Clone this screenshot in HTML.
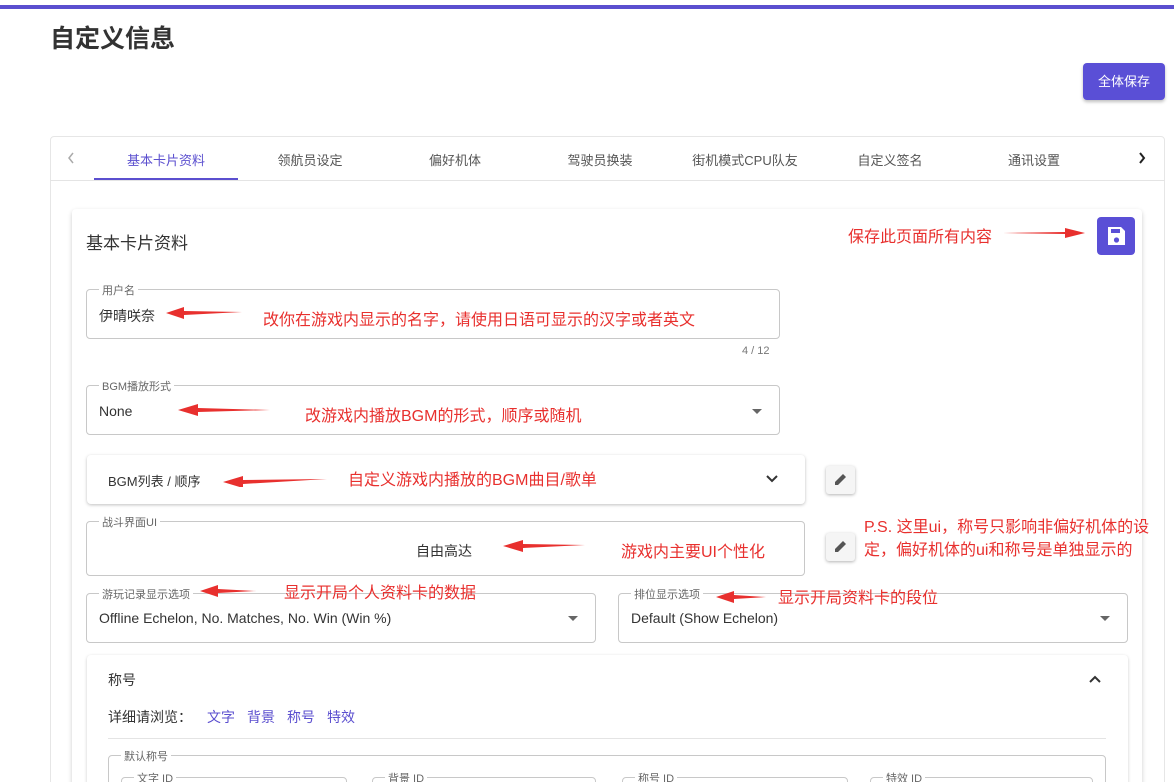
<!DOCTYPE html>
<html><head><meta charset="utf-8"><style>
*{box-sizing:border-box;margin:0;padding:0}
html,body{width:1174px;height:782px;overflow:hidden}
body{background:#fff;font-family:"Liberation Sans","Noto Sans CJK SC",sans-serif;color:#333;position:relative}
.a{position:absolute}
.fs{position:absolute;border:1px solid #c8c8c8;border-radius:4px}
.lb{position:absolute;top:-8px;background:#fff;padding:0 3px;font-size:11px;color:#666}
.red{position:absolute;color:#e8302e;font-size:16px;white-space:nowrap}
.tab{position:absolute;top:150px;font-size:13px;color:#555;transform:translateX(-50%);white-space:nowrap}
.eb{position:absolute;width:29px;height:28px;background:#f5f5f5;border-radius:3px;box-shadow:0 1px 3px rgba(0,0,0,.3)}
.val{position:absolute;font-size:14px;color:#333}
.tri{position:absolute;width:0;height:0;border-left:5px solid transparent;border-right:5px solid transparent;border-top:5px solid #666}
.lk{color:#5b4fcf;position:absolute;top:0}
</style></head><body>
<div class="a" style="left:0;top:5px;width:1174px;height:4px;background:#5b4fcf"></div>
<div class="a" style="left:50px;top:19px;font-size:25px;font-weight:bold;color:#333">自定义信息</div>
<div class="a" style="left:1083px;top:63px;width:82px;height:37px;background:#5a4fd6;border-radius:4px;color:#fff;font-size:13px;line-height:37px;text-align:center;box-shadow:0 2px 3px rgba(0,0,0,.25)">全体保存</div>

<div class="a" style="left:50px;top:136px;width:1115px;height:660px;border:1px solid #e6e6e6;border-radius:4px;background:#fff"></div>
<div class="a" style="left:50px;top:180px;width:1115px;height:1px;background:#e4e4e4"></div>
<svg class="a" style="left:67px;top:152px" width="8" height="12"><path d="M6 1 L2 6 L6 11" stroke="#aaa" stroke-width="1.5" fill="none"/></svg>
<svg class="a" style="left:1138px;top:152px" width="8" height="12"><path d="M2 1 L6 6 L2 11" stroke="#222" stroke-width="2" fill="none"/></svg>
<div class="tab" style="left:166px;color:#5b4fcf">基本卡片资料</div>
<div class="tab" style="left:310px">领航员设定</div>
<div class="tab" style="left:455px">偏好机体</div>
<div class="tab" style="left:600px">驾驶员换装</div>
<div class="tab" style="left:745px">街机模式CPU队友</div>
<div class="tab" style="left:890px">自定义签名</div>
<div class="tab" style="left:1034px">通讯设置</div>
<div class="a" style="left:94px;top:178px;width:144px;height:2px;background:#5b4fcf"></div>

<div class="a" style="left:72px;top:209px;width:1070px;height:600px;background:#fff;border-radius:4px;box-shadow:0 2px 5px rgba(0,0,0,.2)"></div>
<div class="a" style="left:86px;top:229px;font-size:17px;color:#333">基本卡片资料</div>
<div class="a" style="left:1097px;top:217px;width:38px;height:38px;background:#5a4fd6;border-radius:4px">
<svg width="38" height="38" viewBox="0 0 38 38"><path d="M11 10h13l4 4v14h-17z" fill="#fff"/><rect x="14" y="12" width="9" height="4" fill="#5a4fd6"/><circle cx="19.5" cy="23" r="2.6" fill="#5a4fd6"/></svg></div>
<div class="red" style="left:848px;top:223px">保存此页面所有内容</div>
<svg class="a" style="left:1003px;top:227px" width="82" height="12"><path d="M0 6 L62 5 L62 1 L82 6 L62 11 L62 7 Z" fill="#e8302e"/></svg>

<div class="fs" style="left:86px;top:289px;width:694px;height:50px"><span class="lb" style="left:12px">用户名</span></div>
<div class="val" style="left:99px;top:306px">伊晴咲奈</div>
<svg class="a" style="left:166px;top:307px" width="76" height="12"><path d="M0 6 L18 0 L18 4 L76 5 L18 8 L18 12 Z" fill="#e8302e"/></svg>
<div class="red" style="left:263px;top:306px">改你在游戏内显示的名字，请使用日语可显示的汉字或者英文</div>
<div class="a" style="left:742px;top:345px;font-size:11px;color:#777">4 / 12</div>

<div class="fs" style="left:86px;top:385px;width:694px;height:50px"><span class="lb" style="left:12px">BGM播放形式</span></div>
<div class="val" style="left:99px;top:403px">None</div>
<div class="tri" style="left:752px;top:409px"></div>
<svg class="a" style="left:178px;top:404px" width="92" height="12"><path d="M0 6 L20 0 L20 4 L92 6 L20 8 L20 12 Z" fill="#e8302e"/></svg>
<div class="red" style="left:305px;top:402px">改游戏内播放BGM的形式，顺序或随机</div>

<div class="a" style="left:87px;top:455px;width:718px;height:49px;background:#fff;border-radius:4px;box-shadow:0 1px 3px rgba(0,0,0,.25)"></div>
<div class="a" style="left:108px;top:471px;font-size:13px">BGM列表 / 顺序</div>
<svg class="a" style="left:766px;top:475px" width="12" height="8"><path d="M1 1 L6 6 L11 1" stroke="#333" stroke-width="2" fill="none"/></svg>
<svg class="a" style="left:223px;top:475px" width="104" height="12"><path d="M0 7 L20 1 L20 5 L104 4 L20 9 L20 13 Z" fill="#e8302e"/></svg>
<div class="red" style="left:348px;top:466px">自定义游戏内播放的BGM曲目/歌单</div>
<div class="eb" style="left:826px;top:466px"><svg width="29" height="28"><path d="M9 19 L9 16 L17 8 L20 11 L12 19 Z" fill="#555"/></svg></div>

<div class="fs" style="left:86px;top:521px;width:719px;height:55px"><span class="lb" style="left:12px">战斗界面UI</span></div>
<div class="val" style="left:416px;top:541px">自由高达</div>
<svg class="a" style="left:503px;top:540px" width="82" height="12"><path d="M0 6 L20 0 L20 4 L82 5 L20 8 L20 12 Z" fill="#e8302e"/></svg>
<div class="red" style="left:621px;top:538px">游戏内主要UI个性化</div>
<div class="eb" style="left:826px;top:533px"><svg width="29" height="28"><path d="M9 19 L9 16 L17 8 L20 11 L12 19 Z" fill="#555"/></svg></div>
<div class="red" style="left:864px;top:516px;line-height:23px">P.S. 这里ui，称号只影响非偏好机体的设<br>定，偏好机体的ui和称号是单独显示的</div>

<div class="fs" style="left:86px;top:593px;width:510px;height:50px"><span class="lb" style="left:12px">游玩记录显示选项</span></div>
<div class="val" style="left:99px;top:610px">Offline Echelon, No. Matches, No. Win (Win %)</div>
<div class="tri" style="left:568px;top:616px"></div>
<svg class="a" style="left:200px;top:585px" width="56" height="12"><path d="M0 6 L18 0 L18 4 L56 6 L18 8 L18 12 Z" fill="#e8302e"/></svg>
<div class="red" style="left:284px;top:579px">显示开局个人资料卡的数据</div>

<div class="fs" style="left:618px;top:593px;width:510px;height:50px"><span class="lb" style="left:12px">排位显示选项</span></div>
<div class="val" style="left:631px;top:610px">Default (Show Echelon)</div>
<div class="tri" style="left:1100px;top:616px"></div>
<svg class="a" style="left:716px;top:591px" width="50" height="12"><path d="M0 6 L18 0 L18 4 L50 6 L18 8 L18 12 Z" fill="#e8302e"/></svg>
<div class="red" style="left:778px;top:584px">显示开局资料卡的段位</div>

<div class="a" style="left:87px;top:655px;width:1041px;height:140px;background:#fff;border-radius:4px;box-shadow:0 1px 3px rgba(0,0,0,.2)"></div>
<div class="a" style="left:108px;top:670px;font-size:14px">称号</div>
<svg class="a" style="left:1089px;top:675px" width="12" height="8"><path d="M1 7 L6 2 L11 7" stroke="#333" stroke-width="2" fill="none"/></svg>
<div class="a" style="left:108px;top:707px;font-size:14px;width:300px;height:20px">详细请浏览：<span class="lk" style="left:99px">文字</span><span class="lk" style="left:139px">背景</span><span class="lk" style="left:179px">称号</span><span class="lk" style="left:219px">特效</span></div>
<div class="a" style="left:108px;top:738px;width:998px;height:1px;background:#e4e4e4"></div>
<div class="fs" style="left:108px;top:755px;width:998px;height:60px"><span class="lb" style="left:12px">默认称号</span></div>
<div class="fs" style="left:121px;top:777px;width:226px;height:40px"><span class="lb" style="left:12px">文字 ID</span></div>
<div class="fs" style="left:372px;top:777px;width:224px;height:40px"><span class="lb" style="left:12px">背景 ID</span></div>
<div class="fs" style="left:622px;top:777px;width:226px;height:40px"><span class="lb" style="left:12px">称号 ID</span></div>
<div class="fs" style="left:870px;top:777px;width:223px;height:40px"><span class="lb" style="left:12px">特效 ID</span></div>
</body></html>
